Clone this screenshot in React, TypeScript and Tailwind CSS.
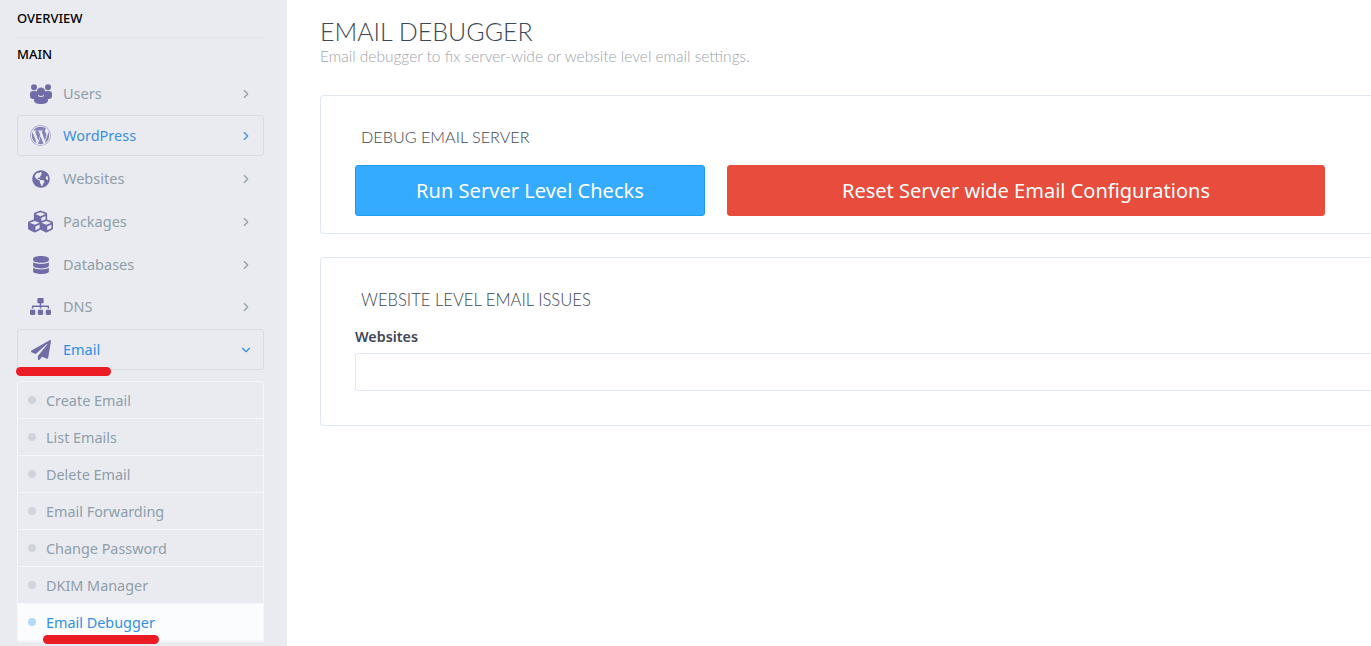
import { ChevronDown, ChevronRight } from "lucide-react";
import {
  FaCubes,
  FaDatabase,
  FaGlobeAmericas,
  FaPaperPlane,
  FaSitemap,
  FaWordpress,
} from "react-icons/fa";

// the users glyph in the picture is chunkier than the icon pack's one
function UsersIcon({ size }: { size: number }) {
  return (
    <svg width={size} height={size} viewBox="0 0 22 20" fill="currentColor">
      <circle cx="4" cy="3.200" r="3" />
      <circle cx="18" cy="3.200" r="3" />
      <circle cx="11" cy="7.800" r="4.200" />
      <rect x="0" y="7" width="8" height="8" rx="3" />
      <rect x="14" y="7" width="8" height="8" rx="3" />
      <path d="M4 16c0-2.600 1.200-4 3-4.400 1 .9 2.400 1.400 4 1.400s3-.5 4-1.400c1.800.4 3 1.800 3 4.400 0 3-3 4-7 4s-7-1-7-4z" />
    </svg>
  );
}

const MENU = [
  { label: "Users", icon: UsersIcon, size: 22, gap: "mb-px" },
  { label: "WordPress", icon: FaWordpress, size: 21, gap: "mb-[2px]", active: true },
  { label: "Websites", icon: FaGlobeAmericas, size: 18, gap: "mb-[2px]" },
  { label: "Packages", icon: FaCubes, size: 25, gap: "mb-[2px]" },
  { label: "Databases", icon: FaDatabase, size: 18, gap: "mb-px" },
  { label: "DNS", icon: FaSitemap, size: 21, gap: "mb-[2px]" },
];

const SUBMENU = [
  "Create Email",
  "List Emails",
  "Delete Email",
  "Email Forwarding",
  "Change Password",
  "DKIM Manager",
  "Email Debugger",
];

const heading = "font-['Lato',sans-serif] font-light text-[#3e4855]";

function MenuRow({ item }: { item: (typeof MENU)[number] }) {
  const Icon = item.icon;
  return (
    <div
      className={[
        "flex h-[41px] items-center rounded-[3px] border",
        item.gap,
        item.active ? "border-[#d8dbe2] text-[#3d8fe0]" : "border-transparent text-[#8f9ea9]",
      ].join(" ")}
    >
      <span className={["flex w-[45px] justify-center", item.active ? "text-[#8582b8]" : "text-[#706ca8]"].join(" ")}>
        <Icon size={item.size} />
      </span>
      <span className="flex-1 text-[14.5px]">{item.label}</span>
      <ChevronRight size={14} className="mr-[10px]" />
    </div>
  );
}

export default function App() {
  return (
    <div className="flex h-[646px] overflow-hidden bg-white font-['Noto_Sans',sans-serif]">
      {/* Sidebar */}
      <aside className="relative w-[287px] shrink-0 bg-[#e9ebf1] pl-[17px] pr-[23px]">
        <div className="flex h-[38px] items-center border-b border-[#e0e6ef] pt-px text-[13px] font-medium text-black">
          OVERVIEW
        </div>
        <div className="flex h-[34px] items-center text-[13px] font-medium text-black">MAIN</div>

        <div className="flex flex-col pt-px">
          {MENU.map((m) => (
            <MenuRow key={m.label} item={m} />
          ))}
          <div className="flex h-[41px] items-center rounded-[3px] border border-[#d8dbe2] text-[#2f8fea]">
            <span className="flex w-[45px] justify-center text-[#706ca8]">
              <FaPaperPlane size={20} />
            </span>
            <span className="flex-1 text-[14.5px]">Email</span>
            <ChevronDown size={14} className="mr-[10px]" />
          </div>
        </div>

        <div className="mt-[11px] overflow-hidden rounded-t-[3px] border border-[#f5f6f9]">
          {SUBMENU.map((s) => {
            const on = s === "Email Debugger";
            return (
              <div
                key={s}
                className={[
                  "flex h-[37px] items-center border-b border-[#f5f6f9] pt-px text-[14.4px]",
                  on ? "bg-[#fbfcfe] text-[#2f8fea]" : "text-[#8f9ea9]",
                ].join(" ")}
              >
                <span
                  className={[
                    "mx-[10px] -mt-px h-2 w-2 rounded-full",
                    on ? "bg-[#b5d8f7]" : "bg-[#cfd4dc]",
                  ].join(" ")}
                />
                {s}
              </div>
            );
          })}
        </div>

        {/* red marker strokes drawn over the screenshot */}
        <div className="absolute left-[16px] top-[367px] h-[9px] w-[95px] rounded-full bg-[#ec1c24]" />
        <div className="absolute left-[43px] top-[635px] h-[9px] w-[116px] rounded-full bg-[#ec1c24]" />
      </aside>

      {/* Main */}
      <main className="min-w-0 flex-1 pl-[33px]">
        <h1 className={`${heading} mt-[15px] text-[25px] leading-[32px]`}>EMAIL DEBUGGER</h1>
        <p className="-mt-px font-['Lato',sans-serif] text-[15.5px] font-light leading-[20px] text-[#a0a4aa]">
          Email debugger to fix server-wide or website level email settings.
        </p>

        <section className="mt-[29px] h-[139px] w-[1060px] rounded-l-[4px] border border-r-0 border-[#e2e8f0] pl-[34px]">
          <h2 className={`${heading} pl-[6px] pt-[31px] text-[16.2px] leading-[20px]`}>DEBUG EMAIL SERVER</h2>
          <div className="mt-[18px] flex gap-[22px]">
            <button className="h-[51px] w-[350px] rounded-[3px] border border-[#1c9bf0] bg-[#35abff] text-[20px] tracking-[0.03px] text-white">
              Run Server Level Checks
            </button>
            <button className="h-[51px] w-[598px] rounded-[3px] border border-[#e74c3c] bg-[#e74c3c] text-[20px] text-white">
              Reset Server wide Email Configurations
            </button>
          </div>
        </section>

        <section className="mt-[23px] h-[169px] w-[1060px] rounded-l-[4px] border border-r-0 border-[#e2e8f0] pl-[34px]">
          <h2 className={`${heading} pl-[6px] pt-[32px] text-[16.6px] leading-[20px]`}>WEBSITE LEVEL EMAIL ISSUES</h2>
          <label className="mt-[17px] block text-[14.3px] font-semibold leading-[20px] text-[#3e4855]">Websites</label>
          <div className="mt-[6px] h-[38px] rounded-l-[3px] border border-r-0 border-[#e2e8f0]" />
        </section>
      </main>
    </div>
  );
}
